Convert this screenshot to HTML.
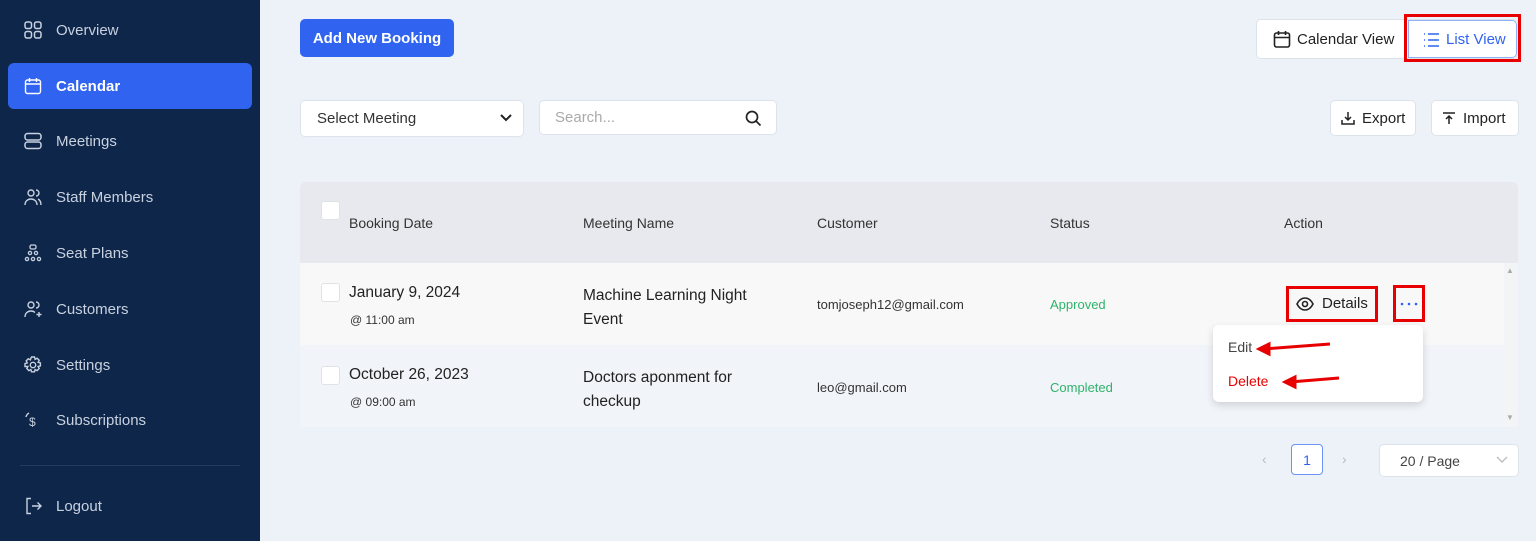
<!DOCTYPE html>
<html><head><style>
*{box-sizing:border-box;margin:0;padding:0}
body{width:1536px;height:541px;overflow:hidden;background:#edf1f8;font-family:"Liberation Sans",sans-serif;position:relative}
.sb{position:absolute;left:0;top:0;width:260px;height:541px;background:#0e264a}
.it{position:absolute;left:8px;width:244px;height:46px;border-radius:6px;color:#c8d1df;font-size:15px;display:flex;align-items:center;padding-left:48px}
.it svg{position:absolute;left:15px;top:13px}
.it.a{background:#2f63f0;color:#fff;font-weight:bold}
.abs{position:absolute}
.btn{position:absolute;background:#fff;border:1px solid #dde3ea;border-radius:5px;font-size:14px;color:#222;display:flex;align-items:center}
.th{position:absolute;top:215px;font-size:14px;color:#333}
.cb{position:absolute;width:19px;height:19px;background:#fff;border:1px solid #dfe3e8;border-radius:3px}
.red{position:absolute;border:3px solid #e80000}
</style></head><body>
<div class="sb">
<div class="it" style="top:7px"><svg width="20" height="20" viewBox="0 0 20 20" fill="none" stroke="#c8d1df" stroke-width="1.5"><rect x="2" y="2" width="6.5" height="6.5" rx="2"/><rect x="11.5" y="2" width="6.5" height="6.5" rx="2"/><rect x="2" y="11.5" width="6.5" height="6.5" rx="2"/><rect x="11.5" y="11.5" width="6.5" height="6.5" rx="2"/></svg>Overview</div>
<div class="it a" style="top:63px"><svg width="20" height="20" viewBox="0 0 20 20" fill="none" stroke="#fff" stroke-width="1.4"><rect x="2.5" y="4" width="15" height="13.5" rx="2"/><path d="M2.5 8h15M6.5 2v4M13.5 2v4"/></svg>Calendar</div>
<div class="it" style="top:118px"><svg width="20" height="20" viewBox="0 0 20 20" fill="none" stroke="#c8d1df" stroke-width="1.5"><rect x="2" y="2.5" width="16" height="6.5" rx="2.5"/><rect x="2" y="11" width="16" height="6.5" rx="2.5"/></svg>Meetings</div>
<div class="it" style="top:174px"><svg width="20" height="20" viewBox="0 0 20 20" fill="none" stroke="#c8d1df" stroke-width="1.4"><circle cx="8" cy="6" r="3"/><path d="M2 18c0-4 3-6 6-6s6 2 6 6M13 3a3 3 0 010 6M15 12c2 1 3 3 3 6"/></svg>Staff Members</div>
<div class="it" style="top:230px"><svg width="20" height="20" viewBox="0 0 20 20" fill="none" stroke="#c8d1df" stroke-width="1.3"><rect x="7" y="2" width="6" height="4" rx="1.5"/><circle cx="7" cy="10" r="1.6"/><circle cx="13" cy="10" r="1.6"/><circle cx="4" cy="16" r="1.6"/><circle cx="10" cy="16" r="1.6"/><circle cx="16" cy="16" r="1.6"/></svg>Seat Plans</div>
<div class="it" style="top:286px"><svg width="20" height="20" viewBox="0 0 20 20" fill="none" stroke="#c8d1df" stroke-width="1.4"><circle cx="8" cy="6" r="3"/><path d="M2 18c0-4 3-6 6-6 2 0 3 .5 4 1.5M13 3a3 3 0 010 6M16 13v5M13.5 15.5h5"/></svg>Customers</div>
<div class="it" style="top:342px"><svg width="20" height="20" viewBox="0 0 20 20" fill="none" stroke="#c8d1df" stroke-width="1.4"><circle cx="10" cy="10" r="2.7"/><path d="M8.5 2h3l.6 2.3 2-1.1 2.1 2.1-1.1 2 2.3.6v3l-2.3.6 1.1 2-2.1 2.1-2-1.1-.6 2.3h-3l-.6-2.3-2 1.1-2.1-2.1 1.1-2L2 11.5v-3l2.3-.6-1.1-2 2.1-2.1 2 1.1z"/></svg>Settings</div>
<div class="it" style="top:397px"><svg width="20" height="20" viewBox="0 0 20 20" fill="none" stroke="#c8d1df" stroke-width="1.4"><path d="M3 7a6 6 0 013-4"/><text x="6" y="16" font-size="12" fill="#c8d1df" stroke="none" font-family="Liberation Sans">$</text></svg>Subscriptions</div>
<div class="abs" style="left:20px;top:465px;width:220px;height:1px;background:#243b5e"></div>
<div class="it" style="top:483px"><svg width="20" height="20" viewBox="0 0 20 20" fill="none" stroke="#c8d1df" stroke-width="1.4"><path d="M8 2.5H4v15h4M9 10h9M14.5 6.5L18 10l-3.5 3.5"/></svg>Logout</div>
</div>

<div class="abs" style="left:300px;top:19px;width:154px;height:38px;background:#2f63f0;border-radius:5px;color:#fff;font-size:15px;font-weight:bold;display:flex;align-items:center;justify-content:center">Add New Booking</div>

<div class="btn" style="left:1256px;top:19px;width:262px;height:40px"></div>
<div class="abs" style="left:1272px;top:29px;font-size:15px;color:#222;display:flex;align-items:center;gap:5px"><svg width="20" height="20" viewBox="0 0 20 20" fill="none" stroke="#222" stroke-width="1.6"><rect x="2.5" y="4" width="15" height="14" rx="2"/><path d="M2.5 8.5h15M6.5 2v4M13.5 2v4"/></svg>Calendar View</div>
<div class="abs" style="left:1408px;top:20px;width:109px;height:38px;border:1px solid #8fb0f7;border-radius:0 5px 5px 0"></div>
<div class="abs" style="left:1423px;top:31px;font-size:15px;color:#2f63f0;display:flex;align-items:center;gap:6px"><svg width="17" height="16" viewBox="0 0 17 16" stroke="#2f63f0" stroke-width="1.5"><path d="M5 2h11M5 8h11M5 14h11M1 2h1M1 8h1M1 14h1"/></svg>List View</div>
<div class="red" style="left:1404px;top:14px;width:117px;height:48px"></div>

<div class="btn" style="left:300px;top:100px;width:224px;height:37px;padding-left:16px;color:#333;font-size:15px">Select Meeting<svg style="position:absolute;right:10px;top:12px" width="14" height="10" viewBox="0 0 14 10" fill="none" stroke="#222" stroke-width="2"><path d="M2 2l5 5 5-5"/></svg></div>
<div class="btn" style="left:539px;top:100px;width:238px;height:35px;padding-left:15px;color:#aaa;font-size:15px">Search...<svg style="position:absolute;right:14px;top:9px" width="17" height="17" viewBox="0 0 17 17" fill="none" stroke="#222" stroke-width="1.7"><circle cx="7" cy="7" r="5.5"/><path d="M11 11l4.5 4.5"/></svg></div>

<div class="btn" style="left:1330px;top:100px;width:86px;height:36px;padding-left:10px;gap:7px;font-size:15px"><svg width="14" height="14" viewBox="0 0 14 14" fill="none" stroke="#222" stroke-width="1.5"><path d="M7 1v8M4 6l3 3 3-3M1 9v4h12V9"/></svg>Export</div>
<div class="btn" style="left:1431px;top:100px;width:88px;height:36px;padding-left:10px;gap:7px;font-size:15px"><svg width="14" height="14" viewBox="0 0 14 14" fill="none" stroke="#222" stroke-width="1.5"><path d="M1 2h12M7 13V5M4 8l3-3 3 3"/></svg>Import</div>

<div class="abs" style="left:300px;top:182px;width:1218px;height:81px;background:#e8e9ee;border-radius:6px 6px 0 0"></div>
<div class="abs" style="left:300px;top:263px;width:1204px;height:82px;background:#f8f8f9"></div>
<div class="abs" style="left:300px;top:345px;width:1204px;height:82px;background:#f1f4f9"></div>
<div class="abs" style="left:1504px;top:263px;width:14px;height:164px;background:#f3f4f6"></div>
<div class="abs" style="left:1506px;top:266px;font-size:8px;color:#aaa">▲</div>
<div class="abs" style="left:1506px;top:413px;font-size:8px;color:#aaa">▼</div>

<div class="cb" style="left:321px;top:201px"></div>
<div class="th" style="left:349px">Booking Date</div>
<div class="th" style="left:583px">Meeting Name</div>
<div class="th" style="left:817px">Customer</div>
<div class="th" style="left:1050px">Status</div>
<div class="th" style="left:1284px">Action</div>

<div class="cb" style="left:321px;top:283px"></div>
<div class="abs" style="left:349px;top:284px;font-size:15.5px;color:#222">January 9, 2024</div>
<div class="abs" style="left:350px;top:313px;font-size:12px;color:#333">@ 11:00 am</div>
<div class="abs" style="left:583px;top:284px;font-size:15.5px;color:#222;line-height:24px;width:200px">Machine Learning Night Event</div>
<div class="abs" style="left:817px;top:297px;font-size:13px;color:#333">tomjoseph12@gmail.com</div>
<div class="abs" style="left:1050px;top:297px;font-size:13px;color:#2fb36a">Approved</div>

<div class="cb" style="left:321px;top:366px"></div>
<div class="abs" style="left:349px;top:366px;font-size:15.5px;color:#222">October 26, 2023</div>
<div class="abs" style="left:350px;top:395px;font-size:12px;color:#333">@ 09:00 am</div>
<div class="abs" style="left:583px;top:366px;font-size:15.5px;color:#222;line-height:24px;width:200px">Doctors aponment for checkup</div>
<div class="abs" style="left:817px;top:380px;font-size:13px;color:#333">leo@gmail.com</div>
<div class="abs" style="left:1050px;top:380px;font-size:13px;color:#2fb36a">Completed</div>

<div class="red" style="left:1286px;top:286px;width:92px;height:36px"></div>
<div class="abs" style="left:1296px;top:295px;font-size:15px;color:#222;display:flex;align-items:center;gap:8px"><svg width="18" height="14" viewBox="0 0 18 14" fill="none" stroke="#222" stroke-width="1.6"><path d="M1 7c2-4 5-6 8-6s6 2 8 6c-2 4-5 6-8 6S3 11 1 7z"/><circle cx="9" cy="7" r="2.5"/></svg>Details</div>
<div class="red" style="left:1393px;top:285px;width:32px;height:37px"></div>
<svg class="abs" style="left:1400px;top:302px" width="18" height="4"><circle cx="2" cy="2" r="1.3" fill="#2f63f0"/><circle cx="9" cy="2" r="1.3" fill="#2f63f0"/><circle cx="16" cy="2" r="1.3" fill="#2f63f0"/></svg>

<div class="abs" style="left:1213px;top:325px;width:210px;height:77px;background:#fff;border-radius:6px;box-shadow:0 3px 8px rgba(0,0,0,.15)"></div>
<div class="abs" style="left:1228px;top:339px;font-size:14px;color:#444">Edit</div>
<div class="abs" style="left:1228px;top:373px;font-size:14px;color:#e80000">Delete</div>
<svg class="abs" style="left:1255px;top:340px" width="90" height="50"><path d="M75 4L8 9M4 9l10-5v10z" stroke="#e80000" stroke-width="3" fill="#e80000"/><path d="M84 38L35 42M30 42l10-5v10z" stroke="#e80000" stroke-width="3" fill="#e80000"/></svg>

<div class="abs" style="left:1262px;top:451px;font-size:14px;color:#bbb">‹</div>
<div class="abs" style="left:1291px;top:444px;width:32px;height:31px;border:1px solid #6b94f5;border-radius:4px;background:#fff;color:#2f63f0;font-size:14px;display:flex;align-items:center;justify-content:center">1</div>
<div class="abs" style="left:1342px;top:451px;font-size:14px;color:#bbb">›</div>
<div class="btn" style="left:1379px;top:444px;width:140px;height:33px;padding-left:20px;font-size:14px;color:#444">20 / Page<svg style="position:absolute;right:10px;top:11px" width="12" height="8" viewBox="0 0 12 8" fill="none" stroke="#bbb" stroke-width="1.3"><path d="M1 1l5 5 5-5"/></svg></div>
</body></html>
